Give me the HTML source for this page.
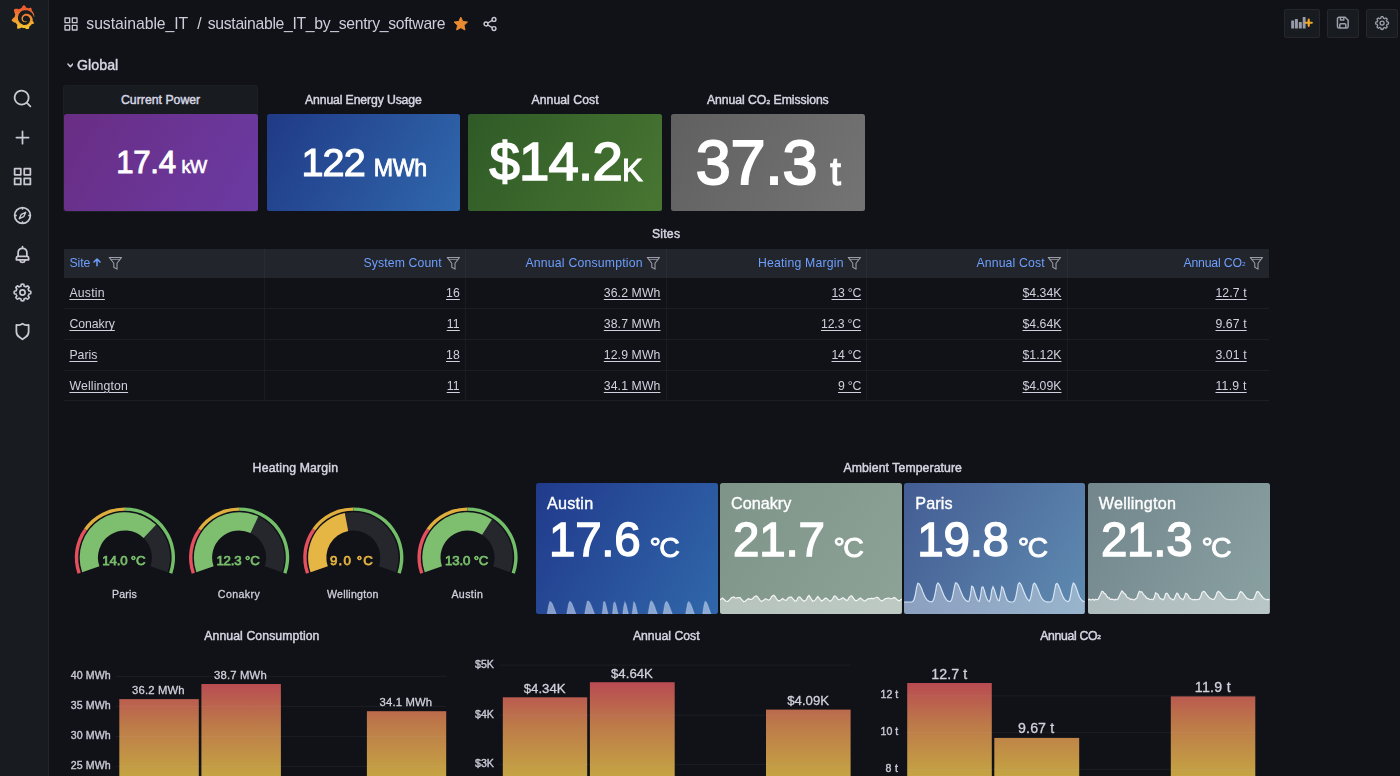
<!DOCTYPE html>
<html lang="en"><head><meta charset="utf-8"><title>sustainable_IT_by_sentry_software - Grafana</title>
<style>
*{box-sizing:border-box}
html,body{margin:0;padding:0}
body{width:1400px;height:776px;overflow:hidden;background:#111217;color:#ccccdc;font-family:'Liberation Sans',sans-serif;position:relative;filter:blur(.4px)}
.t{position:absolute;white-space:pre;line-height:1}
.abs{position:absolute}
nav.side{position:absolute;left:0;top:0;width:49px;height:776px;background:#181b1f;border-right:1px solid #22252a}
nav.side svg{position:absolute;fill:#c9cad4}
header.top{position:absolute;left:49px;top:0;width:1351px;height:47px}
.tb{position:absolute;top:9.2px;height:28.6px;background:#181b1f;border:1px solid #25272d;border-radius:2px}
section{position:absolute}
.ptitle{color:#d2d3e0}
.sub{font-size:.85em;position:relative;top:-.14em}

.stat{border-radius:2.5px}
.hov{background:#181b1f;border:1px solid #1c1f24;border-radius:2.5px}
table.sites{position:absolute;border-collapse:collapse;table-layout:fixed;font-size:12.25px}
table.sites th,table.sites td{padding:0;height:30.85px;border-bottom:1px solid #1c1e23;border-right:1px solid #1a1c21;position:relative}
table.sites th{height:29px;background:#22252b;border-bottom:none;border-right:1px solid #292c32;color:#6e9fff;font-weight:400}
table.sites td:last-child,table.sites th:last-child{border-right:none}
table.sites td .t{text-decoration:underline;text-decoration-thickness:1px;text-underline-offset:1.5px;color:#d0d1de}

.amb{border-radius:2.5px;overflow:hidden}

.bars line{stroke:rgba(204,204,220,.07);stroke-width:1}
</style></head>
<body>
<nav class="side"><svg class="abs" style="left:10.7px;top:4.6px" width="23.9" height="24.850" viewBox="0 0 351 365">
<defs><linearGradient id="lg" gradientUnits="userSpaceOnUse" x1="175.5" y1="394" x2="175.5" y2="53"><stop offset="0" stop-color="#f8d830"/><stop offset="1" stop-color="#ec5c30"/></linearGradient></defs>
<path fill="url(#lg)" d="M342,161.2c-.6-6.1-1.6-13.1-3.6-20.9-2-7.7-5-16.2-9.4-25-4.4-8.8-10.1-17.9-17.5-26.8-2.9-3.5-6.1-6.9-9.5-10.2 5.1-20.3-6.2-37.9-6.2-37.9-19.5-1.2-31.9,6.1-36.5,9.4-.8-.3-1.5-.7-2.3-1-3.3-1.3-6.7-2.6-10.3-3.7-3.5-1.1-7.1-2.1-10.8-3-3.7-.9-7.4-1.6-11.2-2.2-.7-.1-1.3-.2-2-.3-8.5-27.2-32.9-38.6-32.9-38.6-27.3,17.3-32.4,41.5-32.4,41.5s-.1.5-.3,1.4c-1.5.4-3,.9-4.5,1.3-2.1.6-4.2,1.4-6.2,2.2-2.1.8-4.1,1.6-6.2,2.5-4.1,1.8-8.2,3.8-12.2,6-3.9,2.2-7.7,4.6-11.4,7.1-.5-.2-1-.4-1-.4-37.8-14.4-71.3,2.9-71.3,2.9-3.1,40.2,15.1,65.5,18.7,70.1-.9,2.5-1.7,5-2.5,7.5-2.8,9.1-4.9,18.4-6.2,28.1-.2,1.4-.4,2.8-.5,4.2C18.8,192.7,8.5,228,8.5,228c29.1,33.5,63.1,35.6,63.1,35.6,0,0,.1-.1.1-.1,4.3,7.7,9.3,15,14.9,21.9,2.4,2.9,4.8,5.6,7.4,8.3-10.6,30.4,1.5,55.6,1.5,55.6,32.4,1.2,53.7-14.2,58.2-17.7,3.2,1.1,6.5,2.1,9.8,2.9,10,2.6,20.2,4.1,30.4,4.5,2.5.1,5.1.2,7.6.1h1.2l.8,0,1.6,0,1.6-.1,0,.1c15.3,21.8,42.1,24.9,42.1,24.9,19.1-20.1,20.2-40.1,20.2-44.4v0s0-.1,0-.3c0-.4,0-.6,0-.6v0c0-.3,0-.6,0-.9,4-2.8,7.8-5.8,11.4-9.1,7.6-6.9,14.3-14.8,19.9-23.3.5-.8,1-1.6,1.5-2.4,21.6,1.2,36.9-13.4,36.9-13.4-3.6-22.5-16.4-33.5-19.1-35.6v0s-.1-.1-.3-.2c-.2-.1-.2-.2-.2-.2,0,0,0,0,0,0-.1-.1-.3-.2-.5-.3.1-1.4.2-2.7.3-4.1.2-2.4.2-4.9.2-7.3v-1.8l0-.9v-.5c0-.6,0-.4,0-.6l-.1-1.5-.1-2c0-.7-.1-1.3-.2-1.9-.1-.6-.1-1.3-.2-1.9l-.2-1.9-.3-1.9c-.4-2.5-.8-4.9-1.4-7.4-2.3-9.7-6.1-18.9-11-27.2-5-8.3-11.2-15.6-18.3-21.8-7-6.2-14.9-11.2-23.1-14.9-8.3-3.7-16.9-6.1-25.5-7.2-4.3-.6-8.6-.8-12.9-.7l-1.6,0h-.4c-.1,0-.6,0-.5,0l-.7,0-1.6.1c-.6,0-1.2.1-1.7.1-2.2.2-4.4.5-6.5.9-8.6,1.6-16.7,4.7-23.8,9-7.1,4.3-13.3,9.6-18.3,15.6-5,6-8.9,12.7-11.6,19.6-2.7,6.9-4.2,14.1-4.6,21-.1,1.7-.1,3.5-.1,5.2,0,.4,0,.9,0,1.3l.1,1.4c.1.8.1,1.7.2,2.5.3,3.5,1,6.9,1.9,10.1,1.9,6.5,4.9,12.4,8.6,17.4,3.7,5,8.2,9.1,12.9,12.4,4.7,3.2,9.8,5.5,14.8,7,5,1.5,10,2.1,14.7,2.1.6,0,1.2,0,1.7,0,.3,0,.6,0,.9,0,.3,0,.6,0,.9-.1.5,0,1-.1,1.5-.1.1,0,.3,0,.4-.1l.5-.1c.3,0,.6-.1.9-.1.6-.1,1.1-.2,1.7-.3.6-.1,1.1-.2,1.6-.4,1.1-.2,2.1-.6,3.1-.9,2-.7,4-1.5,5.7-2.4,1.8-.9,3.4-2,5-3,.4-.3.9-.6,1.3-1,1.6-1.3,1.9-3.7.6-5.3-1.1-1.4-3.1-1.8-4.7-.9-.4.2-.8.4-1.2.6-1.4.7-2.8,1.3-4.3,1.8-1.5.5-3.1.9-4.7,1.2-.8.1-1.6.2-2.5.3-.4,0-.8.1-1.3.1-.4,0-.9,0-1.2,0-.4,0-.8,0-1.2,0-.5,0-1,0-1.5-.1,0,0-.3,0-.1,0l-.2,0-.3,0c-.2,0-.5,0-.7-.1-.5-.1-.9-.1-1.4-.2-3.7-.5-7.4-1.6-10.9-3.2-3.6-1.6-7-3.8-10.1-6.6-3.1-2.8-5.8-6.1-7.9-9.9-2.1-3.8-3.6-8-4.3-12.4-.3-2.2-.5-4.5-.4-6.7,0-.6.1-1.2.1-1.8,0,.2,0-.1,0-.1l0-.2,0-.5c0-.3.1-.6.1-.9.1-1.2.3-2.4.5-3.6,1.7-9.6,6.5-19,13.9-26.1,1.9-1.8,3.9-3.4,6-4.9,2.1-1.5,4.4-2.8,6.8-3.9,2.4-1.1,4.8-2,7.4-2.7,2.5-.7,5.1-1.1,7.8-1.4,1.3-.1,2.6-.2,4-.2.4,0,.6,0,.9,0l1.1,0,.7,0c.3,0,0,0,.1,0l.3,0,1.1.1c2.9.2,5.7.6,8.5,1.3,5.6,1.2,11.1,3.3,16.2,6.1,10.2,5.7,18.9,14.5,24.2,25.1,2.7,5.3,4.6,11,5.5,16.9.2,1.5.4,3,.5,4.5l.1,1.1.1,1.1c0,.4,0,.8,0,1.1,0,.4,0,.8,0,1.1v1l0,1.1c0,.7-.1,1.9-.1,2.6-.1,1.6-.3,3.3-.5,4.9-.2,1.6-.5,3.2-.8,4.8-.3,1.6-.7,3.2-1.1,4.7-.8,3.1-1.8,6.2-3,9.3-2.4,6-5.6,11.8-9.4,17.1-7.7,10.6-18.2,19.2-30.2,24.7-6,2.7-12.3,4.7-18.8,5.7-3.2.6-6.5.9-9.8,1l-.6,0h-.5l-1.1,0h-1.6-.8c.4,0-.1,0-.1,0l-.3,0c-1.8,0-3.5-.1-5.3-.3-7-.5-13.9-1.8-20.7-3.7-6.7-1.9-13.2-4.6-19.4-7.8-12.3-6.6-23.4-15.6-32-26.5-4.3-5.4-8.1-11.3-11.2-17.4-3.1-6.1-5.6-12.6-7.4-19.1-1.8-6.6-2.9-13.3-3.4-20.1l-.1-1.3,0-.3,0-.3,0-.6,0-1.1,0-.3,0-.4,0-.8,0-1.6,0-.3c0,0,0,.1,0-.1l0-.6c0-.8,0-1.7,0-2.5.1-3.3.4-6.8.8-10.2.4-3.4,1-6.9,1.7-10.3.7-3.4,1.5-6.8,2.5-10.2,1.9-6.7,4.3-13.2,7.1-19.3,5.7-12.2,13.1-23.1,22-31.8,2.2-2.2,4.5-4.2,6.9-6.2,2.4-1.9,4.9-3.7,7.5-5.4,2.5-1.7,5.2-3.2,7.9-4.6,1.3-.7,2.7-1.4,4.1-2,.7-.3,1.4-.6,2.1-.9.7-.3,1.4-.6,2.1-.9,2.8-1.2,5.7-2.2,8.7-3.1.7-.2,1.5-.4,2.2-.7.7-.2,1.5-.4,2.2-.6,1.5-.4,3-.8,4.5-1.1.7-.2,1.5-.3,2.3-.5.8-.2,1.5-.3,2.3-.5.8-.1,1.5-.3,2.3-.4l1.1-.2,1.2-.2c.8-.1,1.5-.2,2.3-.3.9-.1,1.7-.2,2.6-.3.7-.1,1.9-.2,2.6-.3.5-.1,1.1-.1,1.6-.2l1.1-.1.5-.1.6,0c.9-.1,1.7-.1,2.6-.2l1.3-.1c0,0,.5,0,.1,0l.3,0,.6,0c.7,0,1.5-.1,2.2-.1,2.9-.1,5.9-.1,8.8,0,5.8.2,11.5.9,17,1.9,11.1,2.1,21.5,5.6,31,10.3,9.5,4.6,17.9,10.3,25.3,16.5.5.4.9.8,1.4,1.2.4.4.9.8,1.3,1.2.9.8,1.7,1.6,2.6,2.4.9.8,1.7,1.6,2.5,2.4.8.8,1.6,1.6,2.4,2.5,3.1,3.3,6,6.6,8.6,10,5.2,6.7,9.4,13.5,12.7,19.9.2.4.4.8.6,1.2.2.4.4.8.6,1.2.4.8.8,1.6,1.1,2.4.4.8.7,1.5,1.1,2.3.3.8.7,1.5,1,2.3,1.2,3,2.4,5.9,3.3,8.6,1.5,4.4,2.6,8.3,3.5,11.7.3,1.4,1.6,2.3,3,2.1,1.5-.1,2.6-1.3,2.6-2.8C342.6,170.4,342.5,166.1,342,161.2z"/></svg><svg class="abs" viewBox="0 0 24 24" width="21" height="21" style="left:12.40px;top:88.00px;"><path d="M21.71,20.29,18,16.61A9,9,0,1,0,16.61,18l3.68,3.68a1,1,0,0,0,1.42,0A1,1,0,0,0,21.71,20.29ZM11,18a7,7,0,1,1,7-7A7,7,0,0,1,11,18Z"/></svg><svg class="abs" viewBox="0 0 24 24" width="21" height="21" style="left:12.40px;top:127.00px;"><path d="M19,11H13V5a1,1,0,0,0-2,0v6H5a1,1,0,0,0,0,2h6v6a1,1,0,0,0,2,0V13h6a1,1,0,0,0,0-2Z"/></svg><svg class="abs" viewBox="0 0 24 24" width="21" height="21" style="left:12.40px;top:165.80px;"><path d="M10,13H3a1,1,0,0,0-1,1v7a1,1,0,0,0,1,1h7a1,1,0,0,0,1-1V14A1,1,0,0,0,10,13ZM9,20H4V15H9ZM21,2H14a1,1,0,0,0-1,1v7a1,1,0,0,0,1,1h7a1,1,0,0,0,1-1V3A1,1,0,0,0,21,2ZM20,9H15V4h5Zm1,4H14a1,1,0,0,0-1,1v7a1,1,0,0,0,1,1h7a1,1,0,0,0,1-1V14A1,1,0,0,0,21,13Zm-1,7H15V15h5ZM10,2H3A1,1,0,0,0,2,3v7a1,1,0,0,0,1,1h7a1,1,0,0,0,1-1V3A1,1,0,0,0,10,2ZM9,9H4V4H9Z"/></svg><svg class="abs" viewBox="0 0 24 24" width="21" height="21" style="left:12.40px;top:204.50px;;color:#c9cad4"><circle cx="12" cy="12" r="9" fill="none" stroke="currentColor" stroke-width="2"/><path d="M15.6,8.4 13.4,13.4 8.4,15.6 10.6,10.6Z" fill="none" stroke="currentColor" stroke-width="1.6" stroke-linejoin="round"/><path d="M12,3v2.5M12,18.5v2.5M3,12h2.5M18.5,12h2.5" stroke="currentColor" stroke-width="1.6" fill="none"/></svg><svg class="abs" viewBox="0 0 24 24" width="21" height="21" style="left:12.40px;top:243.50px;"><path d="M18,13.18V10a6,6,0,0,0-5-5.91V3a1,1,0,0,0-2,0V4.09A6,6,0,0,0,6,10v3.18A3,3,0,0,0,4,16v2a1,1,0,0,0,1,1H8.14a4,4,0,0,0,7.72,0H19a1,1,0,0,0,1-1V16A3,3,0,0,0,18,13.18ZM8,10a4,4,0,0,1,8,0v3H8Zm4,10a2,2,0,0,1-1.72-1h3.44A2,2,0,0,1,12,20Zm6-3H6V16a1,1,0,0,1,1-1H17a1,1,0,0,1,1,1Z"/></svg><svg class="abs" viewBox="0 0 24 24" width="21" height="21" style="left:12.40px;top:282.20px;;color:#c9cad4"><path d="M12.00,2.50L12.37,2.51L12.75,2.53L13.12,2.57L13.47,2.69L13.66,3.66L13.77,4.64L14.04,4.78L14.32,4.87L14.60,4.96L14.87,5.07L15.14,5.19L15.40,5.32L15.66,5.46L15.96,5.54L16.72,4.93L17.54,4.37L17.88,4.54L18.17,4.78L18.45,5.02L18.72,5.28L18.98,5.55L19.22,5.83L19.46,6.12L19.63,6.46L19.07,7.28L18.46,8.04L18.54,8.34L18.68,8.60L18.81,8.86L18.93,9.13L19.04,9.40L19.13,9.68L19.22,9.96L19.36,10.23L20.34,10.34L21.31,10.53L21.43,10.88L21.47,11.25L21.49,11.63L21.50,12.00L21.49,12.37L21.47,12.75L21.43,13.12L21.31,13.47L20.34,13.66L19.36,13.77L19.22,14.04L19.13,14.32L19.04,14.60L18.93,14.87L18.81,15.14L18.68,15.40L18.54,15.66L18.46,15.96L19.07,16.72L19.63,17.54L19.46,17.88L19.22,18.17L18.98,18.45L18.72,18.72L18.45,18.98L18.17,19.22L17.88,19.46L17.54,19.63L16.72,19.07L15.96,18.46L15.66,18.54L15.40,18.68L15.14,18.81L14.87,18.93L14.60,19.04L14.32,19.13L14.04,19.22L13.77,19.36L13.66,20.34L13.47,21.31L13.12,21.43L12.75,21.47L12.37,21.49L12.00,21.50L11.63,21.49L11.25,21.47L10.88,21.43L10.53,21.31L10.34,20.34L10.23,19.36L9.96,19.22L9.68,19.13L9.40,19.04L9.13,18.93L8.86,18.81L8.60,18.68L8.34,18.54L8.04,18.46L7.28,19.07L6.46,19.63L6.12,19.46L5.83,19.22L5.55,18.98L5.28,18.72L5.02,18.45L4.78,18.17L4.54,17.88L4.37,17.54L4.93,16.72L5.54,15.96L5.46,15.66L5.32,15.40L5.19,15.14L5.07,14.87L4.96,14.60L4.87,14.32L4.78,14.04L4.64,13.77L3.66,13.66L2.69,13.47L2.57,13.12L2.53,12.75L2.51,12.37L2.50,12.00L2.51,11.63L2.53,11.25L2.57,10.88L2.69,10.53L3.66,10.34L4.64,10.23L4.78,9.96L4.87,9.68L4.96,9.40L5.07,9.13L5.19,8.86L5.32,8.60L5.46,8.34L5.54,8.04L4.93,7.28L4.37,6.46L4.54,6.12L4.78,5.83L5.02,5.55L5.28,5.28L5.55,5.02L5.83,4.78L6.12,4.54L6.46,4.37L7.28,4.93L8.04,5.54L8.34,5.46L8.60,5.32L8.86,5.19L9.13,5.07L9.40,4.96L9.68,4.87L9.96,4.78L10.23,4.64L10.34,3.66L10.53,2.69L10.88,2.57L11.25,2.53L11.63,2.51Z" fill="none" stroke="currentColor" stroke-width="1.9" stroke-linejoin="round"/><circle cx="12" cy="12" r="3" fill="none" stroke="currentColor" stroke-width="1.9"/></svg><svg class="abs" viewBox="0 0 24 24" width="21" height="21" style="left:12.40px;top:320.80px;"><path d="M19.63,3.65a1,1,0,0,0-.84-.2,8,8,0,0,1-6.22-1.27,1,1,0,0,0-1.14,0A8,8,0,0,1,5.21,3.45a1,1,0,0,0-.84.2A1,1,0,0,0,4,4.43v7.45a9,9,0,0,0,3.77,7.33l3.65,2.6a1,1,0,0,0,1.16,0l3.65-2.6A9,9,0,0,0,20,11.880V4.43A1,1,0,0,0,19.63,3.65ZM18,11.88a7,7,0,0,1-2.93,5.69L12,19.77l-3.07-2.2A7,7,0,0,1,6,11.88V5.58a10,10,0,0,0,6-1.39,10,10,0,0,0,6,1.390Z"/></svg></nav><header class="top"><svg class="abs" viewBox="0 0 24 24" width="16" height="16" style="left:13.70px;top:15.70px;fill:#c4c5d2"><path d="M10,13H3a1,1,0,0,0-1,1v7a1,1,0,0,0,1,1h7a1,1,0,0,0,1-1V14A1,1,0,0,0,10,13ZM9,20H4V15H9ZM21,2H14a1,1,0,0,0-1,1v7a1,1,0,0,0,1,1h7a1,1,0,0,0,1-1V3A1,1,0,0,0,21,2ZM20,9H15V4h5Zm1,4H14a1,1,0,0,0-1,1v7a1,1,0,0,0,1,1h7a1,1,0,0,0,1-1V14A1,1,0,0,0,21,13Zm-1,7H15V15h5ZM10,2H3A1,1,0,0,0,2,3v7a1,1,0,0,0,1,1h7a1,1,0,0,0,1-1V3A1,1,0,0,0,10,2ZM9,9H4V4H9Z"/></svg><span class="t" style="left:37.30px;top:15.61px;font-size:15.75px;letter-spacing:-0.038px;color:#cdcedb;">sustainable_IT</span><span class="t" style="left:148.20px;top:15.61px;font-size:15.75px;letter-spacing:0.609px;color:#cdcedb;">/</span><span class="t" style="left:158.80px;top:15.61px;font-size:15.75px;letter-spacing:-0.314px;color:#cdcedb;">sustainable_IT_by_sentry_software</span><svg class="abs" style="left:403.6px;top:16.2px" width="15.6" height="15.6" viewBox="0 0 24 24"><path fill="#eb8b30" d="M12,1.8 15.1,8.4 22.3,9.3 17,14.3 18.4,21.5 12,18 5.6,21.5 7,14.3 1.7,9.3 8.9,8.4Z" stroke="#eb8b30" stroke-width="1.5" stroke-linejoin="round"/></svg><svg class="abs" style="left:433.0px;top:15.7px" width="16" height="16" viewBox="0 0 24 24" fill="none" stroke="#c9cad4" stroke-width="2.1"><circle cx="18" cy="5.2" r="2.9"/><circle cx="6" cy="12" r="2.9"/><circle cx="18" cy="18.8" r="2.9"/><path d="M8.6,10.5 15.4,6.7M8.6,13.5 15.4,17.3"/></svg><div class="tb" style="left:1234.5px;width:36.6px"></div><div class="tb" style="left:1278.3px;width:31.9px"></div><div class="tb" style="left:1317.3px;width:31.9px"></div><svg class="abs" style="left:1241px;top:15px" width="24" height="16" viewBox="1290 15 24 16">
<g fill="#9a9ba8"><rect x="1291.2" y="20.6" width="2.9" height="8" rx=".5"/><rect x="1294.9" y="19" width="3" height="9.6" rx=".5"/><rect x="1298.8" y="22.1" width="3" height="6.5" rx=".5"/><rect x="1302.7" y="16.9" width="2.9" height="11.7" rx=".5"/></g>
<path d="M1308.7,19.650v6.2M1305.6,22.750h6.2" stroke="#f0a82c" stroke-width="2.2" stroke-linecap="round"/></svg><svg class="abs" style="left:1287.4px;top:16.1px" width="13.6" height="13.4" viewBox="0 0 20 20" fill="none" stroke="#9fa0ad" stroke-width="2.2" stroke-linejoin="round"><path d="M2,4.5A2.5,2.5 0 0 1 4.5,2H13.5L18,6.5V15.5A2.5,2.5 0 0 1 15.5,18H4.5A2.5,2.5 0 0 1 2,15.5Z"/><path d="M6.5,2.5V6H11.5V2.5M5.5,18V13A1.5,1.5 0 0 1 7,11.5H13A1.5,1.5 0 0 1 14.5,13V18"/></svg><svg class="abs" viewBox="0 0 24 24" width="16.2" height="16.2" style="left:1324.90px;top:14.70px;fill:#9fa0ad;color:#9fa0ad"><path d="M12.00,2.50L12.37,2.51L12.75,2.53L13.12,2.57L13.47,2.69L13.66,3.66L13.77,4.64L14.04,4.78L14.32,4.87L14.60,4.96L14.87,5.07L15.14,5.19L15.40,5.32L15.66,5.46L15.96,5.54L16.72,4.93L17.54,4.37L17.88,4.54L18.17,4.78L18.45,5.02L18.72,5.28L18.98,5.55L19.22,5.83L19.46,6.12L19.63,6.46L19.07,7.28L18.46,8.04L18.54,8.34L18.68,8.60L18.81,8.86L18.93,9.13L19.04,9.40L19.13,9.68L19.22,9.96L19.36,10.23L20.34,10.34L21.31,10.53L21.43,10.88L21.47,11.25L21.49,11.63L21.50,12.00L21.49,12.37L21.47,12.75L21.43,13.12L21.31,13.47L20.34,13.66L19.36,13.77L19.22,14.04L19.13,14.32L19.04,14.60L18.93,14.87L18.81,15.14L18.68,15.40L18.54,15.66L18.46,15.96L19.07,16.72L19.63,17.54L19.46,17.88L19.22,18.17L18.98,18.45L18.72,18.72L18.45,18.98L18.17,19.22L17.88,19.46L17.54,19.63L16.72,19.07L15.96,18.46L15.66,18.54L15.40,18.68L15.14,18.81L14.87,18.93L14.60,19.04L14.32,19.13L14.04,19.22L13.77,19.36L13.66,20.34L13.47,21.31L13.12,21.43L12.75,21.47L12.37,21.49L12.00,21.50L11.63,21.49L11.25,21.47L10.88,21.43L10.53,21.31L10.34,20.34L10.23,19.36L9.96,19.22L9.68,19.13L9.40,19.04L9.13,18.93L8.86,18.81L8.60,18.68L8.34,18.54L8.04,18.46L7.28,19.07L6.46,19.63L6.12,19.46L5.83,19.22L5.55,18.98L5.28,18.72L5.02,18.45L4.78,18.17L4.54,17.88L4.37,17.54L4.93,16.72L5.54,15.96L5.46,15.66L5.32,15.40L5.19,15.14L5.07,14.87L4.96,14.60L4.87,14.32L4.78,14.04L4.64,13.77L3.66,13.66L2.69,13.47L2.57,13.12L2.53,12.75L2.51,12.37L2.50,12.00L2.51,11.63L2.53,11.25L2.57,10.88L2.69,10.53L3.66,10.34L4.64,10.23L4.78,9.96L4.87,9.68L4.96,9.40L5.07,9.13L5.19,8.86L5.32,8.60L5.46,8.34L5.54,8.04L4.93,7.28L4.37,6.46L4.54,6.12L4.78,5.83L5.02,5.55L5.28,5.28L5.55,5.02L5.83,4.78L6.12,4.54L6.46,4.37L7.28,4.93L8.04,5.54L8.34,5.46L8.60,5.32L8.86,5.19L9.13,5.07L9.40,4.96L9.68,4.87L9.96,4.78L10.23,4.64L10.34,3.66L10.53,2.69L10.88,2.57L11.25,2.53L11.63,2.51Z" fill="none" stroke="currentColor" stroke-width="1.9" stroke-linejoin="round"/><circle cx="12" cy="12" r="3" fill="none" stroke="currentColor" stroke-width="1.9"/></svg></header><section style="left:63px;top:52px;width:1206px;height:26px"><svg class="abs" style="left:3.5999999999999943px;top:10.799999999999997px" width="6.8" height="5" viewBox="0 0 6.8 5"><path d="M1,1 3.4,3.7 5.8,1" fill="none" stroke="#c9cad6" stroke-width="1.6" stroke-linecap="round" stroke-linejoin="round"/></svg><span class="t" style="left:14.00px;top:5.53px;font-size:14.2px;letter-spacing:0.047px;color:#d5d6e3;-webkit-text-stroke:0.45px currentColor;">Global</span></section><section style="left:63px;top:85px;width:195.3px;height:127px"><div class="abs hov" style="left:0;top:0;width:195.3px;height:127px"></div><span class="t ptitle" style="left:58.00px;top:8.99px;font-size:12.25px;letter-spacing:0.017px;color:#d5d6e3;-webkit-text-stroke:0.45px currentColor;">Current Power</span><div class="abs stat" style="left:1px;top:29.3px;width:193.7px;height:97.2px;background:linear-gradient(120deg,#692d84,#6b3ba3)"></div><span class="t" style="left:53.30px;top:61.78px;font-size:31.2px;letter-spacing:-0.326px;color:#fff;-webkit-text-stroke:0.94px currentColor;">17.4</span><span class="t" style="left:118.40px;top:72.83px;font-size:18.2px;letter-spacing:-0.433px;color:#fff;-webkit-text-stroke:0.62px currentColor;">kW</span></section><section style="left:265.6px;top:85px;width:195.4px;height:127px"><span class="t ptitle" style="left:39.40px;top:8.99px;font-size:12.25px;letter-spacing:-0.131px;color:#d5d6e3;-webkit-text-stroke:0.45px currentColor;">Annual Energy Usage</span><div class="abs stat" style="left:1px;top:29.3px;width:193.8px;height:97.2px;background:linear-gradient(120deg,#203a86,#3068ad)"></div><span class="t" style="left:35.80px;top:58.34px;font-size:39.6px;letter-spacing:-0.782px;color:#fff;-webkit-text-stroke:1.19px currentColor;">122</span><span class="t" style="left:108.10px;top:72.28px;font-size:23.2px;letter-spacing:-0.336px;color:#fff;-webkit-text-stroke:0.79px currentColor;">MWh</span></section><section style="left:467.2px;top:85px;width:195.2px;height:127px"><span class="t ptitle" style="left:64.30px;top:8.99px;font-size:12.25px;letter-spacing:0.032px;color:#d5d6e3;-webkit-text-stroke:0.45px currentColor;">Annual Cost</span><div class="abs stat" style="left:1px;top:29.3px;width:193.6px;height:97.2px;background:linear-gradient(120deg,#2f5a27,#487632)"></div><span class="t" style="left:22.20px;top:50.48px;font-size:54.5px;letter-spacing:-0.758px;color:#fff;-webkit-text-stroke:1.64px currentColor;">$14.2</span><span class="t" style="left:154.80px;top:70.45px;font-size:31px;letter-spacing:-2.288px;color:#fff;-webkit-text-stroke:1.05px currentColor;">K</span></section><section style="left:670.1px;top:85px;width:195.5px;height:127px"><span class="t ptitle" style="left:36.90px;top:8.99px;font-size:12.25px;letter-spacing:-0.076px;color:#d5d6e3;-webkit-text-stroke:0.45px currentColor;">Annual CO<span class="sub">₂</span> Emissions</span><div class="abs stat" style="left:1px;top:29.3px;width:193.9px;height:97.2px;background:linear-gradient(120deg,#606060,#747474)"></div><span class="t" style="left:25.60px;top:46.25px;font-size:63px;letter-spacing:-0.231px;color:#fff;-webkit-text-stroke:1.89px currentColor;">37.3</span><span class="t" style="left:160.10px;top:67.50px;font-size:38px;letter-spacing:0.537px;color:#fff;-webkit-text-stroke:1.29px currentColor;">t</span></section><section style="left:63px;top:222px;width:1206px;height:190px"><span class="t ptitle" style="left:589.00px;top:5.79px;font-size:12.25px;letter-spacing:0.193px;color:#d5d6e3;-webkit-text-stroke:0.45px currentColor;">Sites</span><table class="sites" style="left:0.7999999999999972px;top:26.599999999999994px;width:1204.8px"><thead><tr><th style="width:200.8px"><span class="t" style="left:5.60px;top:8.19px;font-size:12.25px;letter-spacing:-0.027px;">Site</span><svg class="abs" style="left:29.6px;top:9.8px" width="8" height="8.4" viewBox="0 0 8 8.4"><path d="M4,7.8V1.2M1,4 4,1 7,4" fill="none" stroke="#6e9fff" stroke-width="1.5" stroke-linecap="round" stroke-linejoin="round"/></svg><svg class="abs" style="left:42.8px;top:6.0px" width="16.8" height="16.8" viewBox="0 0 24 24"><path d="M3.2,3.5H20.8L14.3,11.8V20.2L9.7,17.6V11.8Z" fill="none" stroke="#9c9da9" stroke-width="1.55" stroke-linejoin="round"/><path d="M5.5,6.3H18.5" stroke="#9c9da9" stroke-width="1.2"/></svg></th><th style="width:200.8px"><span class="t" style="left:98.40px;top:8.19px;font-size:12.25px;letter-spacing:0.114px;">System Count</span><svg class="abs" style="left:179.8px;top:6.0px" width="16.8" height="16.8" viewBox="0 0 24 24"><path d="M3.2,3.5H20.8L14.3,11.8V20.2L9.7,17.6V11.8Z" fill="none" stroke="#9c9da9" stroke-width="1.55" stroke-linejoin="round"/><path d="M5.5,6.3H18.5" stroke="#9c9da9" stroke-width="1.2"/></svg></th><th style="width:200.8px"><span class="t" style="left:59.60px;top:8.19px;font-size:12.25px;letter-spacing:0.193px;">Annual Consumption</span><svg class="abs" style="left:179.0px;top:6.0px" width="16.8" height="16.8" viewBox="0 0 24 24"><path d="M3.2,3.5H20.8L14.3,11.8V20.2L9.7,17.6V11.8Z" fill="none" stroke="#9c9da9" stroke-width="1.55" stroke-linejoin="round"/><path d="M5.5,6.3H18.5" stroke="#9c9da9" stroke-width="1.2"/></svg></th><th style="width:200.8px"><span class="t" style="left:91.30px;top:8.19px;font-size:12.25px;letter-spacing:0.187px;">Heating Margin</span><svg class="abs" style="left:179.6px;top:6.0px" width="16.8" height="16.8" viewBox="0 0 24 24"><path d="M3.2,3.5H20.8L14.3,11.8V20.2L9.7,17.6V11.8Z" fill="none" stroke="#9c9da9" stroke-width="1.55" stroke-linejoin="round"/><path d="M5.5,6.3H18.5" stroke="#9c9da9" stroke-width="1.2"/></svg></th><th style="width:200.8px"><span class="t" style="left:109.00px;top:8.19px;font-size:12.25px;letter-spacing:0.132px;">Annual Cost</span><svg class="abs" style="left:178.8px;top:6.0px" width="16.8" height="16.8" viewBox="0 0 24 24"><path d="M3.2,3.5H20.8L14.3,11.8V20.2L9.7,17.6V11.8Z" fill="none" stroke="#9c9da9" stroke-width="1.55" stroke-linejoin="round"/><path d="M5.5,6.3H18.5" stroke="#9c9da9" stroke-width="1.2"/></svg></th><th style="width:200.8px"><span class="t" style="left:115.20px;top:8.19px;font-size:12.25px;letter-spacing:-0.178px;">Annual CO<span class="sub">₂</span></span><svg class="abs" style="left:180.0px;top:6.0px" width="16.8" height="16.8" viewBox="0 0 24 24"><path d="M3.2,3.5H20.8L14.3,11.8V20.2L9.7,17.6V11.8Z" fill="none" stroke="#9c9da9" stroke-width="1.55" stroke-linejoin="round"/><path d="M5.5,6.3H18.5" stroke="#9c9da9" stroke-width="1.2"/></svg></th></tr></thead><tbody><tr><td><span class="t" style="left:5.60px;top:9.40px;font-size:12.25px;letter-spacing:0.242px;">Austin</span></td><td><span class="t" style="left:180.90px;top:9.40px;font-size:12.25px;letter-spacing:0.080px;">16</span></td><td><span class="t" style="left:137.90px;top:9.40px;font-size:12.25px;letter-spacing:0.109px;">36.2 MWh</span></td><td><span class="t" style="left:164.80px;top:9.40px;font-size:12.25px;letter-spacing:-0.236px;">13 °C</span></td><td><span class="t" style="left:155.00px;top:9.40px;font-size:12.25px;letter-spacing:0.029px;">$4.34K</span></td><td><span class="t" style="left:147.20px;top:9.40px;font-size:12.25px;letter-spacing:0.091px;">12.7 t</span></td></tr><tr><td><span class="t" style="left:5.60px;top:9.25px;font-size:12.25px;letter-spacing:-0.032px;">Conakry</span></td><td><span class="t" style="left:181.60px;top:9.25px;font-size:12.25px;letter-spacing:0.191px;">11</span></td><td><span class="t" style="left:137.90px;top:9.25px;font-size:12.25px;letter-spacing:0.109px;">38.7 MWh</span></td><td><span class="t" style="left:154.30px;top:9.25px;font-size:12.25px;letter-spacing:-0.129px;">12.3 °C</span></td><td><span class="t" style="left:155.00px;top:9.25px;font-size:12.25px;letter-spacing:0.029px;">$4.64K</span></td><td><span class="t" style="left:147.20px;top:9.25px;font-size:12.25px;letter-spacing:0.091px;">9.67 t</span></td></tr><tr><td><span class="t" style="left:5.60px;top:9.21px;font-size:12.25px;letter-spacing:0.016px;">Paris</span></td><td><span class="t" style="left:180.90px;top:9.21px;font-size:12.25px;letter-spacing:0.080px;">18</span></td><td><span class="t" style="left:137.90px;top:9.21px;font-size:12.25px;letter-spacing:0.109px;">12.9 MWh</span></td><td><span class="t" style="left:164.80px;top:9.21px;font-size:12.25px;letter-spacing:-0.236px;">14 °C</span></td><td><span class="t" style="left:155.00px;top:9.21px;font-size:12.25px;letter-spacing:0.029px;">$1.12K</span></td><td><span class="t" style="left:147.20px;top:9.21px;font-size:12.25px;letter-spacing:0.091px;">3.01 t</span></td></tr><tr><td><span class="t" style="left:5.60px;top:9.26px;font-size:12.25px;letter-spacing:0.172px;">Wellington</span></td><td><span class="t" style="left:181.60px;top:9.26px;font-size:12.25px;letter-spacing:0.191px;">11</span></td><td><span class="t" style="left:137.90px;top:9.26px;font-size:12.25px;letter-spacing:0.109px;">34.1 MWh</span></td><td><span class="t" style="left:171.30px;top:9.26px;font-size:12.25px;letter-spacing:-0.217px;">9 °C</span></td><td><span class="t" style="left:155.00px;top:9.26px;font-size:12.25px;letter-spacing:0.029px;">$4.09K</span></td><td><span class="t" style="left:147.20px;top:9.26px;font-size:12.25px;letter-spacing:0.242px;">11.9 t</span></td></tr></tbody></table></section><section style="left:63px;top:455px;width:465px;height:160px"><span class="t ptitle" style="left:189.60px;top:7.49px;font-size:12.25px;letter-spacing:0.187px;color:#d5d6e3;-webkit-text-stroke:0.45px currentColor;">Heating Margin</span><svg class="abs" style="left:0;top:0" width="465" height="160" viewBox="63 455 465 160"><path d="M82.16,572.22A45.2,45.2 0 1 1 167.64,572.22L150.43,566.29A27,27 0 1 0 99.37,566.29Z" fill="#25272c"/><path d="M82.16,572.22A45.2,45.2 0 0 1 156.07,524.77L143.52,537.95A27,27 0 0 0 99.37,566.29Z" fill="#7ebf6f"/><path d="M77.53,573.81A50.1,50.1 0 0 1 84.11,528.41L86.88,530.38A46.7,46.7 0 0 0 80.74,572.70Z" fill="#e5505f"/><path d="M84.11,528.41A50.1,50.1 0 0 1 124.90,507.40L124.90,510.80A46.7,46.7 0 0 0 86.88,530.38Z" fill="#e0ae3c"/><path d="M124.90,507.40A50.1,50.1 0 0 1 172.27,573.81L169.06,572.70A46.7,46.7 0 0 0 124.90,510.80Z" fill="#73bf69"/><path d="M196.36,572.22A45.2,45.2 0 1 1 281.84,572.22L264.63,566.29A27,27 0 1 0 213.57,566.29Z" fill="#25272c"/><path d="M196.36,572.22A45.2,45.2 0 0 1 258.25,516.56L250.54,533.04A27,27 0 0 0 213.57,566.29Z" fill="#7ebf6f"/><path d="M191.73,573.81A50.1,50.1 0 0 1 198.31,528.41L201.08,530.38A46.7,46.7 0 0 0 194.94,572.70Z" fill="#e5505f"/><path d="M198.31,528.41A50.1,50.1 0 0 1 239.10,507.40L239.10,510.80A46.7,46.7 0 0 0 201.08,530.38Z" fill="#e0ae3c"/><path d="M239.10,507.40A50.1,50.1 0 0 1 286.47,573.81L283.26,572.70A46.7,46.7 0 0 0 239.10,510.80Z" fill="#73bf69"/><path d="M310.56,572.22A45.2,45.2 0 1 1 396.04,572.22L378.83,566.29A27,27 0 1 0 327.77,566.29Z" fill="#25272c"/><path d="M310.56,572.22A45.2,45.2 0 0 1 344.75,513.12L348.19,530.99A27,27 0 0 0 327.77,566.29Z" fill="#e6b645"/><path d="M305.93,573.81A50.1,50.1 0 0 1 312.51,528.41L315.28,530.38A46.7,46.7 0 0 0 309.14,572.70Z" fill="#e5505f"/><path d="M312.51,528.41A50.1,50.1 0 0 1 353.30,507.40L353.30,510.80A46.7,46.7 0 0 0 315.28,530.38Z" fill="#e0ae3c"/><path d="M353.30,507.40A50.1,50.1 0 0 1 400.67,573.81L397.46,572.70A46.7,46.7 0 0 0 353.30,510.80Z" fill="#73bf69"/><path d="M424.76,572.22A45.2,45.2 0 1 1 510.24,572.22L493.03,566.29A27,27 0 1 0 441.97,566.29Z" fill="#25272c"/><path d="M424.76,572.22A45.2,45.2 0 0 1 491.92,519.46L482.09,534.78A27,27 0 0 0 441.97,566.29Z" fill="#7ebf6f"/><path d="M420.13,573.81A50.1,50.1 0 0 1 426.71,528.41L429.48,530.38A46.7,46.7 0 0 0 423.34,572.70Z" fill="#e5505f"/><path d="M426.71,528.41A50.1,50.1 0 0 1 467.50,507.40L467.50,510.80A46.7,46.7 0 0 0 429.48,530.38Z" fill="#e0ae3c"/><path d="M467.50,507.40A50.1,50.1 0 0 1 514.87,573.81L511.66,572.70A46.7,46.7 0 0 0 467.50,510.80Z" fill="#73bf69"/></svg><span class="t" style="left:39.30px;top:98.90px;font-size:13.3px;letter-spacing:-0.214px;color:#78bd6b;-webkit-text-stroke:0.75px currentColor;">14.0 °C</span><span class="t" style="left:49.10px;top:134.19px;font-size:10.6px;letter-spacing:0.112px;color:#cfd0dc;-webkit-text-stroke:0.3px currentColor;">Paris</span><span class="t" style="left:153.40px;top:98.90px;font-size:13.3px;letter-spacing:-0.186px;color:#78bd6b;-webkit-text-stroke:0.75px currentColor;">12.3 °C</span><span class="t" style="left:154.80px;top:134.19px;font-size:10.6px;letter-spacing:0.435px;color:#cfd0dc;-webkit-text-stroke:0.3px currentColor;">Conakry</span><span class="t" style="left:267.00px;top:98.90px;font-size:13.3px;letter-spacing:1.148px;color:#e3b341;-webkit-text-stroke:0.75px currentColor;">9.0 °C</span><span class="t" style="left:264.00px;top:134.19px;font-size:10.6px;letter-spacing:0.242px;color:#cfd0dc;-webkit-text-stroke:0.3px currentColor;">Wellington</span><span class="t" style="left:382.00px;top:98.90px;font-size:13.3px;letter-spacing:-0.171px;color:#78bd6b;-webkit-text-stroke:0.75px currentColor;">13.0 °C</span><span class="t" style="left:388.40px;top:134.19px;font-size:10.6px;letter-spacing:0.408px;color:#cfd0dc;-webkit-text-stroke:0.3px currentColor;">Austin</span></section><section style="left:536px;top:455px;width:734px;height:160px"><span class="t ptitle" style="left:307.50px;top:7.49px;font-size:12.25px;letter-spacing:0.085px;color:#d5d6e3;-webkit-text-stroke:0.45px currentColor;">Ambient Temperature</span><div class="abs amb" style="left:0.1px;top:28px;width:181.6px;height:130.5px;background:linear-gradient(120deg,#213a8c,#3067aa)"><svg class="abs" style="left:0;top:0" width="181.6" height="130.5"><path d="M0.0,139.0L1.3,139.0L2.5,139.0L3.8,139.0L5.0,139.0L6.3,139.0L7.5,138.9L8.8,138.2L10.0,135.9L11.3,130.6L12.5,123.2L13.8,118.6L15.0,119.0L16.3,120.8L17.5,123.8L18.8,127.1L20.0,130.4L21.3,133.2L22.5,135.4L23.8,136.9L25.0,137.9L26.3,138.5L27.6,138.7L28.8,137.7L30.1,134.4L31.3,127.9L32.6,120.7L33.8,118.2L35.1,119.3L36.3,121.6L37.6,124.8L38.8,128.2L40.1,131.4L41.3,134.0L42.6,136.0L43.8,137.3L45.1,138.1L46.3,138.2L47.6,135.9L48.8,130.8L50.1,123.5L51.3,118.3L52.6,118.1L53.9,119.7L55.1,122.3L56.4,125.5L57.6,128.8L58.9,131.8L60.1,134.3L61.4,136.1L62.6,137.3L63.9,138.1L65.1,137.4L66.4,129.7L67.6,118.7L68.9,118.8L70.1,123.0L71.4,128.6L72.6,133.5L73.9,136.6L75.1,138.1L76.4,132.0L77.6,120.2L78.9,118.9L80.2,122.9L81.4,128.5L82.7,133.5L83.9,136.6L85.2,138.2L86.4,134.8L87.7,123.8L88.9,118.8L90.2,121.7L91.4,127.0L92.7,132.3L93.9,135.9L95.2,137.3L96.4,129.0L97.7,118.9L98.9,120.1L100.2,124.7L101.4,130.2L102.7,134.6L104.0,137.2L105.2,138.4L106.5,138.8L107.7,139.0L109.0,138.7L110.2,137.6L111.5,134.3L112.7,127.6L114.0,120.3L115.2,117.8L116.5,118.9L117.7,121.3L119.0,124.5L120.2,128.0L121.5,131.3L122.7,133.9L124.0,135.9L125.2,137.3L126.5,134.2L127.7,127.7L129.0,120.6L130.3,118.3L131.5,119.3L132.8,121.7L134.0,124.9L135.3,128.3L136.5,131.5L137.8,134.1L139.0,136.0L140.3,137.3L141.5,138.1L142.8,138.6L144.0,138.8L145.3,138.9L146.5,138.8L147.8,137.8L149.0,134.4L150.3,127.6L151.5,120.4L152.8,118.5L154.0,119.9L155.3,122.5L156.6,126.0L157.8,129.5L159.1,132.7L160.3,135.1L161.6,136.8L162.8,137.8L164.1,138.4L165.3,136.8L166.6,131.5L167.8,123.3L169.1,118.3L170.3,119.0L171.6,121.4L172.8,124.9L174.1,128.7L175.3,132.2L176.6,134.9L177.8,136.7L179.1,137.9L180.3,138.5L181.6,138.8L181.6,131L0,131Z" fill="rgba(225,235,255,.52)"/><path d="M0.0,139.0L1.3,139.0L2.5,139.0L3.8,139.0L5.0,139.0L6.3,139.0L7.5,138.9L8.8,138.2L10.0,135.9L11.3,130.6L12.5,123.2L13.8,118.6L15.0,119.0L16.3,120.8L17.5,123.8L18.8,127.1L20.0,130.4L21.3,133.2L22.5,135.4L23.8,136.9L25.0,137.9L26.3,138.5L27.6,138.7L28.8,137.7L30.1,134.4L31.3,127.9L32.6,120.7L33.8,118.2L35.1,119.3L36.3,121.6L37.6,124.8L38.8,128.2L40.1,131.4L41.3,134.0L42.6,136.0L43.8,137.3L45.1,138.1L46.3,138.2L47.6,135.9L48.8,130.8L50.1,123.5L51.3,118.3L52.6,118.1L53.9,119.7L55.1,122.3L56.4,125.5L57.6,128.8L58.9,131.8L60.1,134.3L61.4,136.1L62.6,137.3L63.9,138.1L65.1,137.4L66.4,129.7L67.6,118.7L68.9,118.8L70.1,123.0L71.4,128.6L72.6,133.5L73.9,136.6L75.1,138.1L76.4,132.0L77.6,120.2L78.9,118.9L80.2,122.9L81.4,128.5L82.7,133.5L83.9,136.6L85.2,138.2L86.4,134.8L87.7,123.8L88.9,118.8L90.2,121.7L91.4,127.0L92.7,132.3L93.9,135.9L95.2,137.3L96.4,129.0L97.7,118.9L98.9,120.1L100.2,124.7L101.4,130.2L102.7,134.6L104.0,137.2L105.2,138.4L106.5,138.8L107.7,139.0L109.0,138.7L110.2,137.6L111.5,134.3L112.7,127.6L114.0,120.3L115.2,117.8L116.5,118.9L117.7,121.3L119.0,124.5L120.2,128.0L121.5,131.3L122.7,133.9L124.0,135.9L125.2,137.3L126.5,134.2L127.7,127.7L129.0,120.6L130.3,118.3L131.5,119.3L132.8,121.7L134.0,124.9L135.3,128.3L136.5,131.5L137.8,134.1L139.0,136.0L140.3,137.3L141.5,138.1L142.8,138.6L144.0,138.8L145.3,138.9L146.5,138.8L147.8,137.8L149.0,134.4L150.3,127.6L151.5,120.4L152.8,118.5L154.0,119.9L155.3,122.5L156.6,126.0L157.8,129.5L159.1,132.7L160.3,135.1L161.6,136.8L162.8,137.8L164.1,138.4L165.3,136.8L166.6,131.5L167.8,123.3L169.1,118.3L170.3,119.0L171.6,121.4L172.8,124.9L174.1,128.7L175.3,132.2L176.6,134.9L177.8,136.7L179.1,137.9L180.3,138.5L181.6,138.8" fill="none" stroke="rgba(255,255,255,.2)" stroke-width="1.2"/></svg><span class="t" style="left:10.80px;top:12.43px;font-size:16.2px;letter-spacing:0.267px;color:#fff;-webkit-text-stroke:0.35px currentColor;">Austin</span><span class="t" style="left:12.90px;top:33.42px;font-size:47.5px;letter-spacing:-0.238px;color:#fff;-webkit-text-stroke:1.4px currentColor;">17.6</span><span class="t" style="left:113.40px;top:49.57px;font-size:28.5px;letter-spacing:-1.692px;color:#fff;-webkit-text-stroke:0.95px currentColor;">°C</span></div><div class="abs amb" style="left:184.2px;top:28px;width:181.8px;height:130.5px;background:linear-gradient(120deg,#7f9489,#8ea398)"><svg class="abs" style="left:0;top:0" width="181.8" height="130.5"><path d="M0.0,116.8L1.3,115.9L2.5,115.1L3.8,116.2L5.0,117.3L6.3,118.5L7.5,118.5L8.8,117.5L10.0,116.3L11.3,114.8L12.5,114.2L13.8,113.9L15.0,114.9L16.3,115.0L17.6,114.7L18.8,114.5L20.1,114.6L21.3,116.1L22.6,117.5L23.8,118.7L25.1,118.2L26.3,117.2L27.6,116.1L28.8,115.7L30.1,116.3L31.3,116.3L32.6,115.7L33.9,114.1L35.1,113.4L36.4,113.0L37.6,113.9L38.9,115.7L40.1,117.3L41.4,118.6L42.6,117.8L43.9,116.9L45.1,115.9L46.4,116.0L47.6,116.8L48.9,117.1L50.2,116.2L51.4,113.8L52.7,112.8L53.9,112.3L55.2,113.6L56.4,115.5L57.7,117.2L58.9,118.1L60.2,117.4L61.4,116.6L62.7,115.6L63.9,116.4L65.2,117.2L66.5,117.4L67.7,115.3L69.0,114.3L70.2,114.1L71.5,114.1L72.7,115.7L74.0,117.0L75.2,118.2L76.5,117.7L77.7,115.0L79.0,113.9L80.2,114.2L81.5,116.0L82.8,117.3L84.0,118.3L85.3,117.6L86.5,116.3L87.8,113.7L89.0,112.5L90.3,114.3L91.5,116.4L92.8,118.2L94.0,117.8L95.3,116.9L96.5,115.2L97.8,113.5L99.0,114.8L100.3,116.6L101.6,118.1L102.8,117.3L104.1,116.2L105.3,115.1L106.6,115.3L107.8,116.4L109.1,117.5L110.3,118.3L111.6,117.2L112.8,115.5L114.1,113.1L115.3,113.1L116.6,114.4L117.9,116.0L119.1,116.8L120.4,116.3L121.6,115.5L122.9,114.7L124.1,115.6L125.4,116.6L126.6,117.5L127.9,116.8L129.1,114.4L130.4,113.2L131.6,112.7L132.9,114.4L134.2,116.2L135.4,117.7L136.7,117.7L137.9,116.8L139.2,115.7L140.4,115.0L141.7,115.9L142.9,116.9L144.2,118.0L145.4,117.6L146.7,116.8L147.9,115.9L149.2,115.5L150.5,115.7L151.7,115.1L153.0,115.8L154.2,115.2L155.5,114.8L156.7,114.3L158.0,114.6L159.2,115.9L160.5,117.1L161.7,118.1L163.0,117.3L164.2,116.4L165.5,115.6L166.8,115.4L168.0,115.0L169.3,115.0L170.5,115.9L171.8,115.5L173.0,115.1L174.3,114.5L175.5,115.3L176.8,116.4L178.0,117.4L179.3,117.9L180.5,117.0L181.8,116.1L181.8,131L0,131Z" fill="rgba(255,255,255,.42)"/><path d="M0.0,116.8L1.3,115.9L2.5,115.1L3.8,116.2L5.0,117.3L6.3,118.5L7.5,118.5L8.8,117.5L10.0,116.3L11.3,114.8L12.5,114.2L13.8,113.9L15.0,114.9L16.3,115.0L17.6,114.7L18.8,114.5L20.1,114.6L21.3,116.1L22.6,117.5L23.8,118.7L25.1,118.2L26.3,117.2L27.6,116.1L28.8,115.7L30.1,116.3L31.3,116.3L32.6,115.7L33.9,114.1L35.1,113.4L36.4,113.0L37.6,113.9L38.9,115.7L40.1,117.3L41.4,118.6L42.6,117.8L43.9,116.9L45.1,115.9L46.4,116.0L47.6,116.8L48.9,117.1L50.2,116.2L51.4,113.8L52.7,112.8L53.9,112.3L55.2,113.6L56.4,115.5L57.7,117.2L58.9,118.1L60.2,117.4L61.4,116.6L62.7,115.6L63.9,116.4L65.2,117.2L66.5,117.4L67.7,115.3L69.0,114.3L70.2,114.1L71.5,114.1L72.7,115.7L74.0,117.0L75.2,118.2L76.5,117.7L77.7,115.0L79.0,113.9L80.2,114.2L81.5,116.0L82.8,117.3L84.0,118.3L85.3,117.6L86.5,116.3L87.8,113.7L89.0,112.5L90.3,114.3L91.5,116.4L92.8,118.2L94.0,117.8L95.3,116.9L96.5,115.2L97.8,113.5L99.0,114.8L100.3,116.6L101.6,118.1L102.8,117.3L104.1,116.2L105.3,115.1L106.6,115.3L107.8,116.4L109.1,117.5L110.3,118.3L111.6,117.2L112.8,115.5L114.1,113.1L115.3,113.1L116.6,114.4L117.9,116.0L119.1,116.8L120.4,116.3L121.6,115.5L122.9,114.7L124.1,115.6L125.4,116.6L126.6,117.5L127.9,116.8L129.1,114.4L130.4,113.2L131.6,112.7L132.9,114.4L134.2,116.2L135.4,117.7L136.7,117.7L137.9,116.8L139.2,115.7L140.4,115.0L141.7,115.9L142.9,116.9L144.2,118.0L145.4,117.6L146.7,116.8L147.9,115.9L149.2,115.5L150.5,115.7L151.7,115.1L153.0,115.8L154.2,115.2L155.5,114.8L156.7,114.3L158.0,114.6L159.2,115.9L160.5,117.1L161.7,118.1L163.0,117.3L164.2,116.4L165.5,115.6L166.8,115.4L168.0,115.0L169.3,115.0L170.5,115.9L171.8,115.5L173.0,115.1L174.3,114.5L175.5,115.3L176.8,116.4L178.0,117.4L179.3,117.9L180.5,117.0L181.8,116.1" fill="none" stroke="rgba(255,255,255,.88)" stroke-width="1.2"/></svg><span class="t" style="left:10.80px;top:12.43px;font-size:16.2px;color:#fff;-webkit-text-stroke:0.35px currentColor;">Conakry</span><span class="t" style="left:12.90px;top:33.42px;font-size:47.5px;letter-spacing:-0.238px;color:#fff;-webkit-text-stroke:1.4px currentColor;">21.7</span><span class="t" style="left:113.40px;top:49.57px;font-size:28.5px;letter-spacing:-1.692px;color:#fff;-webkit-text-stroke:0.95px currentColor;">°C</span></div><div class="abs amb" style="left:368.4px;top:28px;width:180.6px;height:130.5px;background:linear-gradient(120deg,#445d94,#5f8bb0)"><svg class="abs" style="left:0;top:0" width="180.6" height="130.5"><path d="M0.0,119.0L1.3,119.0L2.5,119.0L3.8,119.0L5.0,119.0L6.3,119.0L7.5,118.9L8.8,118.5L10.0,116.7L11.3,112.0L12.5,104.8L13.8,100.3L15.1,100.7L16.3,102.7L17.6,105.6L18.8,108.9L20.1,112.0L21.3,114.5L22.6,116.4L23.8,117.6L25.1,118.3L26.3,118.7L27.6,118.8L28.8,118.1L30.1,115.3L31.4,109.3L32.6,102.3L33.9,100.0L35.1,101.1L36.4,103.5L37.6,106.7L38.9,110.0L40.1,112.9L41.4,115.2L42.6,116.9L43.9,117.9L45.2,118.5L46.4,118.4L47.7,116.6L48.9,111.9L50.2,105.0L51.4,99.9L52.7,100.0L53.9,101.6L55.2,104.3L56.4,107.5L57.7,110.6L58.9,113.4L60.2,115.5L61.5,117.0L62.7,117.9L64.0,118.5L65.2,117.9L66.5,111.8L67.7,103.1L69.0,103.8L70.2,107.5L71.5,112.0L72.7,115.6L74.0,117.7L75.3,118.4L76.5,113.5L77.8,104.2L79.0,103.9L80.3,107.4L81.5,112.0L82.8,115.6L84.0,117.7L85.3,118.6L86.5,115.8L87.8,106.8L89.0,103.7L90.3,106.5L91.6,110.9L92.8,114.8L94.1,117.3L95.3,117.7L96.6,110.9L97.8,103.5L99.1,105.0L100.3,109.0L101.6,113.3L102.8,116.5L104.1,118.1L105.4,118.7L106.6,118.9L107.9,119.0L109.1,118.8L110.4,117.9L111.6,114.8L112.9,108.4L114.1,101.5L115.4,99.7L116.6,100.9L117.9,103.5L119.1,106.7L120.4,110.1L121.7,113.1L122.9,115.3L124.2,116.9L125.4,117.9L126.7,114.7L127.9,108.3L129.2,101.6L130.4,100.1L131.7,101.4L132.9,103.9L134.2,107.1L135.5,110.4L136.7,113.3L138.0,115.5L139.2,117.0L140.5,118.0L141.7,118.5L143.0,118.8L144.2,118.9L145.5,119.0L146.7,118.8L148.0,117.9L149.2,114.7L150.5,108.0L151.8,101.3L153.0,100.4L154.3,102.0L155.5,104.9L156.8,108.3L158.0,111.6L159.3,114.4L160.5,116.3L161.8,117.6L163.0,118.3L164.3,118.6L165.6,116.9L166.8,111.6L168.1,103.7L169.3,100.0L170.6,101.1L171.8,103.8L173.1,107.4L174.3,111.0L175.6,114.0L176.8,116.2L178.1,117.6L179.3,118.4L180.6,118.7L180.6,131L0,131Z" fill="rgba(255,255,255,.36)"/><path d="M0.0,119.0L1.3,119.0L2.5,119.0L3.8,119.0L5.0,119.0L6.3,119.0L7.5,118.9L8.8,118.5L10.0,116.7L11.3,112.0L12.5,104.8L13.8,100.3L15.1,100.7L16.3,102.7L17.6,105.6L18.8,108.9L20.1,112.0L21.3,114.5L22.6,116.4L23.8,117.6L25.1,118.3L26.3,118.7L27.6,118.8L28.8,118.1L30.1,115.3L31.4,109.3L32.6,102.3L33.9,100.0L35.1,101.1L36.4,103.5L37.6,106.7L38.9,110.0L40.1,112.9L41.4,115.2L42.6,116.9L43.9,117.9L45.2,118.5L46.4,118.4L47.7,116.6L48.9,111.9L50.2,105.0L51.4,99.9L52.7,100.0L53.9,101.6L55.2,104.3L56.4,107.5L57.7,110.6L58.9,113.4L60.2,115.5L61.5,117.0L62.7,117.9L64.0,118.5L65.2,117.9L66.5,111.8L67.7,103.1L69.0,103.8L70.2,107.5L71.5,112.0L72.7,115.6L74.0,117.7L75.3,118.4L76.5,113.5L77.8,104.2L79.0,103.9L80.3,107.4L81.5,112.0L82.8,115.6L84.0,117.7L85.3,118.6L86.5,115.8L87.8,106.8L89.0,103.7L90.3,106.5L91.6,110.9L92.8,114.8L94.1,117.3L95.3,117.7L96.6,110.9L97.8,103.5L99.1,105.0L100.3,109.0L101.6,113.3L102.8,116.5L104.1,118.1L105.4,118.7L106.6,118.9L107.9,119.0L109.1,118.8L110.4,117.9L111.6,114.8L112.9,108.4L114.1,101.5L115.4,99.7L116.6,100.9L117.9,103.5L119.1,106.7L120.4,110.1L121.7,113.1L122.9,115.3L124.2,116.9L125.4,117.9L126.7,114.7L127.9,108.3L129.2,101.6L130.4,100.1L131.7,101.4L132.9,103.9L134.2,107.1L135.5,110.4L136.7,113.3L138.0,115.5L139.2,117.0L140.5,118.0L141.7,118.5L143.0,118.8L144.2,118.9L145.5,119.0L146.7,118.8L148.0,117.9L149.2,114.7L150.5,108.0L151.8,101.3L153.0,100.4L154.3,102.0L155.5,104.9L156.8,108.3L158.0,111.6L159.3,114.4L160.5,116.3L161.8,117.6L163.0,118.3L164.3,118.6L165.6,116.9L166.8,111.6L168.1,103.7L169.3,100.0L170.6,101.1L171.8,103.8L173.1,107.4L174.3,111.0L175.6,114.0L176.8,116.2L178.1,117.6L179.3,118.4L180.6,118.7" fill="none" stroke="rgba(230,242,255,.85)" stroke-width="1.2"/></svg><span class="t" style="left:10.80px;top:12.43px;font-size:16.2px;letter-spacing:0.142px;color:#fff;-webkit-text-stroke:0.35px currentColor;">Paris</span><span class="t" style="left:12.90px;top:33.42px;font-size:47.5px;letter-spacing:-0.238px;color:#fff;-webkit-text-stroke:1.4px currentColor;">19.8</span><span class="t" style="left:113.40px;top:49.57px;font-size:28.5px;letter-spacing:-1.692px;color:#fff;-webkit-text-stroke:0.95px currentColor;">°C</span></div><div class="abs amb" style="left:552.0px;top:28px;width:181.5px;height:130.5px;background:linear-gradient(120deg,#72868c,#8aa1a2)"><svg class="abs" style="left:0;top:0" width="181.5" height="130.5"><path d="M0.0,117.1L1.3,116.0L2.5,117.0L3.8,116.6L5.0,116.2L6.3,117.2L7.5,116.2L8.8,116.6L10.0,116.5L11.3,113.9L12.5,111.6L13.8,108.4L15.0,108.5L16.3,110.4L17.5,110.9L18.8,113.2L20.0,114.6L21.3,114.9L22.5,116.5L23.8,116.1L25.0,116.3L26.3,117.0L27.5,116.1L28.8,116.8L30.0,115.8L31.3,113.0L32.5,110.4L33.8,108.0L35.0,109.0L36.3,110.6L37.6,111.4L38.8,113.9L40.1,114.7L41.3,115.3L42.6,116.6L43.8,116.0L45.1,116.7L46.3,116.8L47.6,115.7L48.8,115.1L50.1,111.3L51.3,108.3L52.6,108.8L53.8,108.8L55.1,110.9L56.3,112.4L57.6,113.4L58.8,115.4L60.1,115.4L61.3,116.1L62.6,116.7L63.8,116.1L65.1,116.8L66.3,114.6L67.6,109.8L68.8,110.4L70.1,111.6L71.3,114.2L72.6,115.8L73.9,115.9L75.1,116.9L76.4,115.2L77.6,110.7L78.9,110.3L80.1,111.5L81.4,114.2L82.6,115.7L83.9,116.0L85.1,116.9L86.4,115.8L87.6,112.4L88.9,110.2L90.1,111.0L91.4,113.7L92.6,115.3L93.9,116.0L95.1,116.7L96.4,114.3L97.6,110.2L98.9,110.7L100.1,112.3L101.4,114.8L102.6,115.8L103.9,116.3L105.1,116.8L106.4,116.4L107.6,116.7L108.9,116.7L110.2,116.3L111.4,116.0L112.7,113.4L113.9,109.8L115.2,108.4L116.4,108.6L117.7,110.2L118.9,111.8L120.2,113.3L121.4,114.8L122.7,115.5L123.9,116.1L125.2,116.5L126.4,115.7L127.7,113.6L128.9,109.9L130.2,108.3L131.4,109.0L132.7,110.2L133.9,111.9L135.2,113.5L136.4,114.7L137.7,115.7L138.9,116.1L140.2,116.4L141.4,116.6L142.7,116.5L143.9,116.6L145.2,116.6L146.5,116.6L147.7,116.5L149.0,115.8L150.2,113.5L151.5,109.8L152.7,108.5L154.0,109.2L155.2,110.7L156.5,112.4L157.7,113.9L159.0,115.2L160.2,115.9L161.5,116.3L162.7,116.6L164.0,116.5L165.2,116.4L166.5,115.0L167.7,111.4L169.0,108.6L170.2,108.7L171.5,110.0L172.7,112.0L174.0,113.5L175.2,115.1L176.5,115.8L177.7,116.2L179.0,116.7L180.2,116.4L181.5,116.6L181.5,131L0,131Z" fill="rgba(255,255,255,.4)"/><path d="M0.0,117.1L1.3,116.0L2.5,117.0L3.8,116.6L5.0,116.2L6.3,117.2L7.5,116.2L8.8,116.6L10.0,116.5L11.3,113.9L12.5,111.6L13.8,108.4L15.0,108.5L16.3,110.4L17.5,110.9L18.8,113.2L20.0,114.6L21.3,114.9L22.5,116.5L23.8,116.1L25.0,116.3L26.3,117.0L27.5,116.1L28.8,116.8L30.0,115.8L31.3,113.0L32.5,110.4L33.8,108.0L35.0,109.0L36.3,110.6L37.6,111.4L38.8,113.9L40.1,114.7L41.3,115.3L42.6,116.6L43.8,116.0L45.1,116.7L46.3,116.8L47.6,115.7L48.8,115.1L50.1,111.3L51.3,108.3L52.6,108.8L53.8,108.8L55.1,110.9L56.3,112.4L57.6,113.4L58.8,115.4L60.1,115.4L61.3,116.1L62.6,116.7L63.8,116.1L65.1,116.8L66.3,114.6L67.6,109.8L68.8,110.4L70.1,111.6L71.3,114.2L72.6,115.8L73.9,115.9L75.1,116.9L76.4,115.2L77.6,110.7L78.9,110.3L80.1,111.5L81.4,114.2L82.6,115.7L83.9,116.0L85.1,116.9L86.4,115.8L87.6,112.4L88.9,110.2L90.1,111.0L91.4,113.7L92.6,115.3L93.9,116.0L95.1,116.7L96.4,114.3L97.6,110.2L98.9,110.7L100.1,112.3L101.4,114.8L102.6,115.8L103.9,116.3L105.1,116.8L106.4,116.4L107.6,116.7L108.9,116.7L110.2,116.3L111.4,116.0L112.7,113.4L113.9,109.8L115.2,108.4L116.4,108.6L117.7,110.2L118.9,111.8L120.2,113.3L121.4,114.8L122.7,115.5L123.9,116.1L125.2,116.5L126.4,115.7L127.7,113.6L128.9,109.9L130.2,108.3L131.4,109.0L132.7,110.2L133.9,111.9L135.2,113.5L136.4,114.7L137.7,115.7L138.9,116.1L140.2,116.4L141.4,116.6L142.7,116.5L143.9,116.6L145.2,116.6L146.5,116.6L147.7,116.5L149.0,115.8L150.2,113.5L151.5,109.8L152.7,108.5L154.0,109.2L155.2,110.7L156.5,112.4L157.7,113.9L159.0,115.2L160.2,115.9L161.5,116.3L162.7,116.6L164.0,116.5L165.2,116.4L166.5,115.0L167.7,111.4L169.0,108.6L170.2,108.7L171.5,110.0L172.7,112.0L174.0,113.5L175.2,115.1L176.5,115.8L177.7,116.2L179.0,116.7L180.2,116.4L181.5,116.6" fill="none" stroke="rgba(255,255,255,.85)" stroke-width="1.2"/></svg><span class="t" style="left:10.80px;top:12.43px;font-size:16.2px;letter-spacing:0.210px;color:#fff;-webkit-text-stroke:0.35px currentColor;">Wellington</span><span class="t" style="left:12.90px;top:33.42px;font-size:47.5px;letter-spacing:-0.238px;color:#fff;-webkit-text-stroke:1.4px currentColor;">21.3</span><span class="t" style="left:113.40px;top:49.57px;font-size:28.5px;letter-spacing:-1.692px;color:#fff;-webkit-text-stroke:0.95px currentColor;">°C</span></div></section><svg width="0" height="0" style="position:absolute"><defs>
<linearGradient id="bg1" gradientUnits="userSpaceOnUse" x1="0" y1="683" x2="0" y2="776"><stop offset="0" stop-color="#b94b52"/><stop offset="0.45" stop-color="#bd7a49"/><stop offset="1" stop-color="#c5a443"/></linearGradient>
</defs></svg><section style="left:63px;top:622px;width:397px;height:154px"><span class="t ptitle" style="left:141.30px;top:7.79px;font-size:12.25px;letter-spacing:0.081px;color:#d5d6e3;-webkit-text-stroke:0.45px currentColor;">Annual Consumption</span><svg class="abs bars" style="left:0;top:0" width="397" height="154" viewBox="63 622 397 154"><rect x="119.3" y="699.1" width="79.5" height="80.9" fill="url(#bg1)"/><rect x="201.4" y="684.0" width="79.5" height="96.0" fill="url(#bg1)"/><rect x="366.9" y="711.2" width="79.3" height="68.8" fill="url(#bg1)"/><line x1="115.5" x2="446.2" y1="676.3" y2="676.3"/><line x1="115.5" x2="446.2" y1="706.3" y2="706.3"/><line x1="115.5" x2="446.2" y1="736.4" y2="736.4"/><line x1="115.5" x2="446.2" y1="766.3" y2="766.3"/></svg><span class="t" style="left:7.80px;top:47.79px;font-size:10.6px;letter-spacing:0.091px;color:#c6c7d3;-webkit-text-stroke:0.4px currentColor;">40 MWh</span><span class="t" style="left:7.80px;top:77.79px;font-size:10.6px;letter-spacing:0.091px;color:#c6c7d3;-webkit-text-stroke:0.4px currentColor;">35 MWh</span><span class="t" style="left:7.80px;top:107.89px;font-size:10.6px;letter-spacing:0.091px;color:#c6c7d3;-webkit-text-stroke:0.4px currentColor;">30 MWh</span><span class="t" style="left:7.80px;top:137.79px;font-size:10.6px;letter-spacing:0.091px;color:#c6c7d3;-webkit-text-stroke:0.4px currentColor;">25 MWh</span><span class="t" style="left:69.10px;top:63.00px;font-size:11.3px;letter-spacing:0.152px;color:#d0d1dc;-webkit-text-stroke:0.3px currentColor;">36.2 MWh</span><span class="t" style="left:151.00px;top:48.00px;font-size:11.3px;letter-spacing:0.177px;color:#d0d1dc;-webkit-text-stroke:0.3px currentColor;">38.7 MWh</span><span class="t" style="left:316.60px;top:75.29px;font-size:11.3px;letter-spacing:0.152px;color:#d0d1dc;-webkit-text-stroke:0.3px currentColor;">34.1 MWh</span></section><section style="left:468px;top:622px;width:397px;height:154px"><span class="t ptitle" style="left:164.90px;top:7.79px;font-size:12.25px;color:#d5d6e3;-webkit-text-stroke:0.45px currentColor;">Annual Cost</span><svg class="abs bars" style="left:0;top:0" width="397" height="154" viewBox="468 622 397 154"><rect x="502.8" y="697.3" width="84.4" height="82.7" fill="url(#bg1)"/><rect x="589.9" y="682.2" width="84.8" height="97.8" fill="url(#bg1)"/><rect x="766.0" y="709.6" width="84.6" height="70.4" fill="url(#bg1)"/><line x1="499.2" x2="850.6" y1="665.1" y2="665.1"/><line x1="499.2" x2="850.6" y1="715.2" y2="715.2"/><line x1="499.2" x2="850.6" y1="764.6" y2="764.6"/></svg><span class="t" style="left:7.10px;top:36.59px;font-size:10.6px;letter-spacing:-0.020px;color:#c6c7d3;-webkit-text-stroke:0.4px currentColor;">$5K</span><span class="t" style="left:7.10px;top:86.69px;font-size:10.6px;letter-spacing:-0.020px;color:#c6c7d3;-webkit-text-stroke:0.4px currentColor;">$4K</span><span class="t" style="left:7.10px;top:136.09px;font-size:10.6px;letter-spacing:-0.020px;color:#c6c7d3;-webkit-text-stroke:0.4px currentColor;">$3K</span><span class="t" style="left:55.70px;top:59.78px;font-size:13.2px;letter-spacing:0.015px;color:#d0d1dc;-webkit-text-stroke:0.3px currentColor;">$4.34K</span><span class="t" style="left:143.00px;top:44.78px;font-size:13.2px;letter-spacing:0.015px;color:#d0d1dc;-webkit-text-stroke:0.3px currentColor;">$4.64K</span><span class="t" style="left:319.20px;top:71.98px;font-size:13.2px;letter-spacing:0.015px;color:#d0d1dc;-webkit-text-stroke:0.3px currentColor;">$4.09K</span></section><section style="left:872px;top:622px;width:397px;height:154px"><span class="t ptitle" style="left:168.30px;top:7.79px;font-size:12.25px;letter-spacing:-0.348px;color:#d5d6e3;-webkit-text-stroke:0.45px currentColor;">Annual CO<span class="sub">₂</span></span><svg class="abs bars" style="left:0;top:0" width="397" height="154" viewBox="872 622 397 154"><rect x="907.2" y="683.0" width="84.6" height="97.0" fill="url(#bg1)"/><rect x="994.3" y="737.9" width="84.9" height="42.1" fill="url(#bg1)"/><rect x="1170.8" y="696.4" width="84.5" height="83.6" fill="url(#bg1)"/><line x1="906.3" x2="1255.2" y1="695.9" y2="695.9"/><line x1="906.3" x2="1255.2" y1="732.4" y2="732.4"/><line x1="906.3" x2="1255.2" y1="769.3" y2="769.3"/></svg><span class="t" style="left:8.50px;top:67.39px;font-size:10.6px;letter-spacing:0.032px;color:#c6c7d3;-webkit-text-stroke:0.4px currentColor;">12 t</span><span class="t" style="left:8.50px;top:103.89px;font-size:10.6px;letter-spacing:0.032px;color:#c6c7d3;-webkit-text-stroke:0.4px currentColor;">10 t</span><span class="t" style="left:13.38px;top:140.79px;font-size:10.6px;letter-spacing:0.381px;color:#c6c7d3;-webkit-text-stroke:0.4px currentColor;">8 t</span><span class="t" style="left:59.30px;top:44.63px;font-size:14.2px;letter-spacing:0.1px;color:#d0d1dc;-webkit-text-stroke:0.3px currentColor;">12.7 t</span><span class="t" style="left:146.10px;top:99.43px;font-size:14.2px;letter-spacing:0.1px;color:#d0d1dc;-webkit-text-stroke:0.3px currentColor;">9.67 t</span><span class="t" style="left:322.80px;top:58.33px;font-size:14.2px;letter-spacing:0.274px;color:#d0d1dc;-webkit-text-stroke:0.3px currentColor;">11.9 t</span></section>
</body></html>
